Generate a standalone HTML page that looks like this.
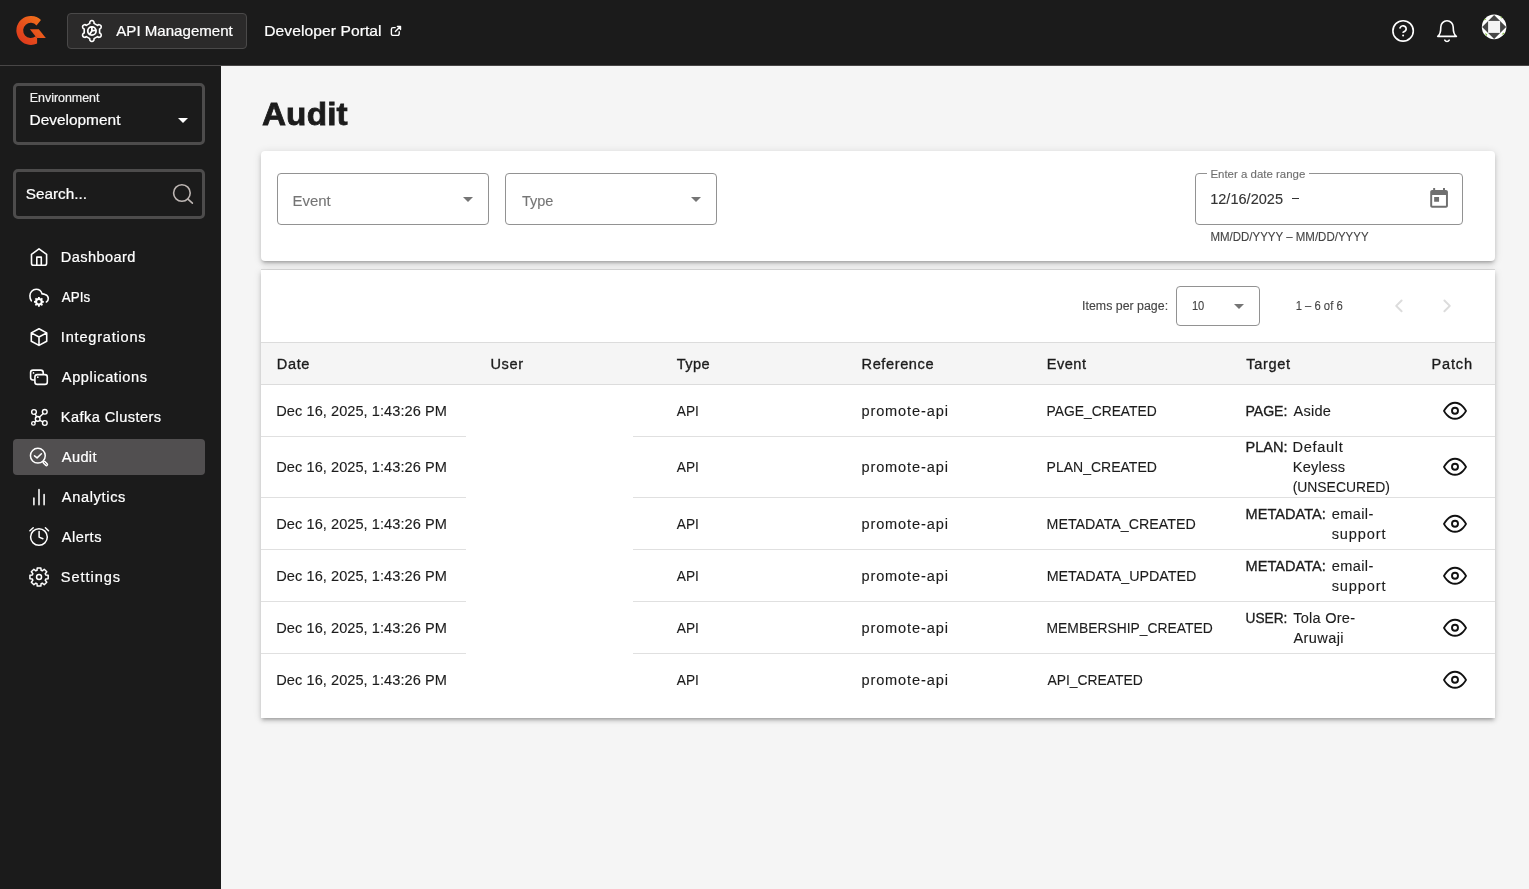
<!DOCTYPE html>
<html lang="en">
<head>
<meta charset="utf-8">
<title>Audit</title>
<style>
*{box-sizing:border-box;margin:0;padding:0}
html,body{width:1529px;height:889px;overflow:hidden;background:#f5f5f5;font-family:"Liberation Sans",sans-serif;color:#1c1c1c}
.a{position:absolute}
.t{position:absolute;white-space:pre;line-height:20px;height:20px;transform-origin:0 50%}
#topbar{position:absolute;left:0;top:0;width:1529px;height:66px;background:#1b1b1b;border-bottom:1px solid #484646}
#sidebar{position:absolute;left:0;top:66px;width:221px;height:823px;background:#1b1b1b}
#main{position:absolute;left:221px;top:67px;width:1308px;height:822px;background:#f5f5f5}
.card{position:absolute;background:#fff;border-radius:4px;box-shadow:0 3px 3px -2px rgba(0,0,0,.2),0 3px 4px 0 rgba(0,0,0,.14),0 1px 8px 0 rgba(0,0,0,.12)}
.tcard{border-radius:0}
.obox{position:absolute;border:1px solid #929292;border-radius:4px;background:#fff}
.dbox{position:absolute;border:3px solid #4d4c4c;border-radius:5px}
.tri{position:absolute;width:0;height:0;border-left:5px solid transparent;border-right:5px solid transparent;border-top:5px solid #757575}
.hl{position:absolute;height:1px;background:#e0e0e0}
svg{position:absolute;overflow:visible}

#texts{position:absolute;left:0;top:0;width:1529px;height:889px;will-change:transform;transform:translateZ(0)}

</style>
</head>
<body>
<div id="topbar"></div>
<div id="sidebar"></div>
<div id="main"></div>
<!-- top bar -->
<div class="a" style="left:67px;top:13px;width:180px;height:36px;border:1px solid #4a4949;border-radius:4px;background:#2b2a2a"></div>
<!-- sidebar -->
<div class="dbox" style="left:13px;top:83px;width:192px;height:62px"></div>
<div class="tri" style="left:178px;top:118px;border-top-color:#fff"></div>
<div class="dbox" style="left:13px;top:169px;width:192px;height:50px"></div>
<div class="a" style="left:13px;top:439px;width:192px;height:36px;border-radius:4px;background:#514f50"></div>
<!-- filter card -->
<div class="card" style="left:261px;top:151px;width:1234px;height:110px"></div>
<div class="obox" style="left:277px;top:173px;width:212px;height:52px"></div>
<div class="tri" style="left:463px;top:197px"></div>
<div class="obox" style="left:505px;top:173px;width:212px;height:52px"></div>
<div class="tri" style="left:691px;top:197px"></div>
<div class="obox" style="left:1195px;top:173px;width:268px;height:52px"></div>
<div class="a" style="left:1207px;top:172px;width:102px;height:4px;background:#fff"></div>
<div class="a" style="left:1292px;top:198px;width:7px;height:1.4px;background:#333"></div>
<!-- table card -->
<div class="card tcard" style="left:261px;top:270px;width:1234px;height:448px"></div>
<div class="a" style="left:261px;top:269px;width:1234px;height:1px;background:rgba(0,0,0,.1)"></div>
<div class="obox" style="left:1176px;top:286px;width:84px;height:40px"></div>
<div class="tri" style="left:1234px;top:304px;border-top-color:#757575"></div>
<div class="a" style="left:261px;top:342px;width:1234px;height:43px;background:#f5f5f5;border-top:1px solid #dcdcdc;border-bottom:1px solid #dcdcdc"></div>
<div class="hl" style="left:261px;top:436px;width:1234px"></div>
<div class="hl" style="left:261px;top:497px;width:1234px"></div>
<div class="hl" style="left:261px;top:549px;width:1234px"></div>
<div class="hl" style="left:261px;top:601px;width:1234px"></div>
<div class="hl" style="left:261px;top:653px;width:1234px"></div>
<!-- redaction block over user column -->
<div class="a" style="left:466px;top:385px;width:167px;height:321px;background:#fff"></div>
<svg width="1529" height="889" viewBox="0 0 1529 889" style="left:0;top:0">
<defs><linearGradient id="lg" x1="45" y1="16" x2="20" y2="45" gradientUnits="userSpaceOnUse"><stop offset="0" stop-color="#f37a1b"/><stop offset="0.55" stop-color="#e8501c"/><stop offset="1" stop-color="#dc361c"/></linearGradient></defs>
<path fill="url(#lg)" d="M40.95 19.95 A14.5 14.5 0 1 0 37.1 43.5 L37.1 38 L35.7 36.2 A7.6 7.6 0 1 1 36.5 25.45 Z"/>
<path fill="url(#lg)" d="M29.9 29.3 L38.8 29.3 L45.8 38 L36.8 38 Z"/>
<path fill="none" stroke="#fff" stroke-width="1.6" stroke-linecap="round" stroke-linejoin="round" d="M89.79 23.36 A2.2 2.2 0 1 1 94.01 23.36 L97.46 25.35 A2.2 2.2 0 1 1 99.58 29.01 L99.58 32.99 A2.2 2.2 0 1 1 97.46 36.65 L94.01 38.64 A2.2 2.2 0 1 1 89.79 38.64 L86.34 36.65 A2.2 2.2 0 1 1 84.22 32.99 L84.22 29.01 A2.2 2.2 0 1 1 86.34 25.35Z"/>
<circle cx="91.9" cy="31" r="4.15" fill="none" stroke="#fff" stroke-width="1.8" stroke-linecap="round" stroke-linejoin="round"/>
<path fill="none" stroke="#fff" stroke-width="1.8" stroke-linecap="round" stroke-linejoin="round" d="M91.9 31 V27 M91.9 31 L95.6 30.1 M91.9 31 L89.6 34.3"/>
<path fill="none" stroke="#fff" stroke-width="1.4" stroke-linecap="round" stroke-linejoin="round" d="M395.2 27.6 H393 a1.6 1.6 0 0 0 -1.6 1.6 V33.8 a1.6 1.6 0 0 0 1.6 1.6 H397.6 a1.6 1.6 0 0 0 1.6 -1.6 V31.8"/>
<path fill="none" stroke="#fff" stroke-width="1.4" stroke-linecap="round" stroke-linejoin="round" d="M395.4 31.6 L400.4 26.6 M397.4 26.5 H400.5 V29.6"/>
<circle cx="1403.1" cy="30.9" r="10.2" fill="none" stroke="#fff" stroke-width="1.6" stroke-linecap="round" stroke-linejoin="round"/>
<path fill="none" stroke="#fff" stroke-width="1.6" stroke-linecap="round" stroke-linejoin="round" d="M1400 27.9 a3.2 3.2 0 0 1 6.2 1.05 c0 2.1 -3.1 3.2 -3.1 3.2"/>
<circle cx="1403.1" cy="35.6" r="1" fill="#fff"/>
<path fill="none" stroke="#fff" stroke-width="1.6" stroke-linecap="round" stroke-linejoin="round" d="M1453.2 27 a6.2 6.2 0 0 0 -12.4 0 c0 7.3 -3.1 9.4 -3.1 9.4 h18.7 s-3.2 -2.1 -3.2 -9.4"/>
<path fill="none" stroke="#fff" stroke-width="1.6" stroke-linecap="round" stroke-linejoin="round" d="M1449.2 40.2 a2.5 2.5 0 0 1 -4.4 0"/>
<clipPath id="av"><circle cx="1494.1" cy="26.9" r="12.3"/></clipPath>
<g clip-path="url(#av)"><rect x="1481" y="14" width="27" height="26" fill="#fff"/><path fill="#464646" d="M1494.1 14.9 L1506.1 26.9 L1494.1 38.9 L1482.1 26.9 Z"/><rect x="1488.1" y="20.9" width="12" height="12" fill="#f4f4f4"/><path fill="#8bc34a" d="M1483.2 20.6 l3.2 -.9 l-2 -1.6z M1499.6 16.2 l2.2 2.6 l.3 -2.2z M1485 33 l1.2 3.2 l1.2 -2z M1501.6 34.8 l3.2 -.8 l-1.6 -1.6z"/></g>
<circle cx="181.9" cy="193" r="8.3" fill="none" stroke="#bdb6b3" stroke-width="1.6" stroke-linecap="round" stroke-linejoin="round"/>
<path fill="none" stroke="#bdb6b3" stroke-width="1.6" stroke-linecap="round" stroke-linejoin="round" d="M187.9 199.1 L192.4 203.2"/>
<path fill="none" stroke="#fff" stroke-width="1.6" stroke-linecap="round" stroke-linejoin="round" d="M31.5 254.3 L39 248.8 L46.6 254.3 V263.2 a2.1 2.1 0 0 1 -2.1 2.1 H33.6 a2.1 2.1 0 0 1 -2.1 -2.1 Z"/>
<path fill="none" stroke="#fff" stroke-width="1.6" stroke-linecap="round" stroke-linejoin="round" d="M36.8 265.2 V257.1 H41.3 V265.2"/>
<path fill="none" stroke="#fff" stroke-width="1.6" stroke-linecap="round" stroke-linejoin="round" d="M31.3 300.8 C30.3 299.5 29.9 297.8 29.9 295.75 C29.9 292.2 32.7 289.3 36.17 289.3 C39 289.3 41.3 291.2 42.13 293.95 C43 293.85 44.1 294.05 45.2 294.55 C47 295.3 48.3 296.7 48.3 298.5 C48.3 300.1 47.6 301.3 46.4 302"/>
<path fill="#fff" fill-rule="evenodd" d="M37.97 298.06 L38.00 296.88 L39.80 296.88 L39.83 298.06 L40.89 298.50 L41.74 297.69 L43.01 298.96 L42.20 299.81 L42.64 300.87 L43.82 300.90 L43.82 302.70 L42.64 302.73 L42.20 303.79 L43.01 304.64 L41.74 305.91 L40.89 305.10 L39.83 305.54 L39.80 306.72 L38.00 306.72 L37.97 305.54 L36.91 305.10 L36.06 305.91 L34.79 304.64 L35.60 303.79 L35.16 302.73 L33.98 302.70 L33.98 300.90 L35.16 300.87 L35.60 299.81 L34.79 298.96 L36.06 297.69 L36.91 298.50Z M40.7 301.8 a1.8 1.8 0 1 0 -3.6 0 a1.8 1.8 0 1 0 3.6 0z"/>
<path fill="none" stroke="#fff" stroke-width="1.6" stroke-linecap="round" stroke-linejoin="round" d="M39 328.7 L46.7 332.9 V341.3 L39 345.4 L31.3 341.3 V332.9 Z M31.3 332.9 L39 337 L46.7 332.9 M39 337 V345.4"/>
<path fill="none" stroke="#fff" stroke-width="1.6" stroke-linecap="round" stroke-linejoin="round" d="M34.2 380 H33 a2.4 2.4 0 0 1 -2.4 -2.4 V372.5 a2.4 2.4 0 0 1 2.4 -2.4 H40.8 a2.4 2.4 0 0 1 2.4 2.4 V374"/>
<rect x="34.9" y="374.6" width="12.4" height="9.8" rx="2.4" fill="none" stroke="#fff" stroke-width="1.6" stroke-linecap="round" stroke-linejoin="round"/>
<circle cx="33.5" cy="372.9" r="0.85" fill="#fff"/><circle cx="37.8" cy="377.2" r="0.85" fill="#fff"/>
<path fill="none" stroke="#fff" stroke-width="1.4" stroke-linecap="round" stroke-linejoin="round" d="M35.2 414 L36.6 416.9 M43.3 413.5 L39.3 417.3 M34.8 422.2 L36 420.7 M39.6 420.3 L43 421.8"/>
<circle cx="34.0" cy="412.0" r="2.3499999999999996" fill="none" stroke="#fff" stroke-width="1.4" stroke-linecap="round" stroke-linejoin="round"/>
<circle cx="44.8" cy="411.8" r="2.3499999999999996" fill="none" stroke="#fff" stroke-width="1.4" stroke-linecap="round" stroke-linejoin="round"/>
<circle cx="37.7" cy="418.9" r="2.3499999999999996" fill="none" stroke="#fff" stroke-width="1.4" stroke-linecap="round" stroke-linejoin="round"/>
<circle cx="33.4" cy="423.4" r="1.75" fill="none" stroke="#fff" stroke-width="1.4" stroke-linecap="round" stroke-linejoin="round"/>
<circle cx="44.8" cy="423.0" r="2.3499999999999996" fill="none" stroke="#fff" stroke-width="1.4" stroke-linecap="round" stroke-linejoin="round"/>
<circle cx="37.85" cy="455.7" r="7.4" fill="none" stroke="#fff" stroke-width="1.5" stroke-linecap="round" stroke-linejoin="round"/>
<path fill="none" stroke="#fff" stroke-width="1.5" stroke-linecap="round" stroke-linejoin="round" d="M34.5 455.8 L37.1 457.9 L41.4 453.8"/>
<path fill="none" stroke="#fff" stroke-width="3.6" stroke-linecap="round" stroke-linejoin="round" d="M44.1 462.3 L46.4 464.5"/><path fill="none" stroke="#514f50" stroke-width="0.9" stroke-linecap="round" stroke-linejoin="round" d="M44.2 462.4 L46.3 464.4"/>
<path fill="none" stroke="#ececec" stroke-width="1.7" stroke-linecap="round" stroke-linejoin="round" d="M33.9 498.2 V504.6 M39 489.7 V504.6 M44.1 494.6 V504.6" stroke-linecap="butt"/>
<circle cx="38.95" cy="537" r="8.35" fill="none" stroke="#fff" stroke-width="1.5" stroke-linecap="round" stroke-linejoin="round"/>
<path fill="none" stroke="#fff" stroke-width="1.5" stroke-linecap="round" stroke-linejoin="round" d="M39.1 531.6 V537.1 L42.9 538.8 M29.9 530.8 L33.2 527.8 M45.4 527.8 L48.5 530.8"/>
<path fill="none" stroke="#fff" stroke-width="1.5" stroke-linecap="round" stroke-linejoin="round" d="M36.99 570.31 L37.24 567.88 L40.86 567.88 L41.11 570.31 L42.33 570.81 L44.22 569.27 L46.78 571.83 L45.24 573.72 L45.74 574.94 L48.17 575.19 L48.17 578.81 L45.74 579.06 L45.24 580.28 L46.78 582.17 L44.22 584.73 L42.33 583.19 L41.11 583.69 L40.86 586.12 L37.24 586.12 L36.99 583.69 L35.77 583.19 L33.88 584.73 L31.32 582.17 L32.86 580.28 L32.36 579.06 L29.93 578.81 L29.93 575.19 L32.36 574.94 L32.86 573.72 L31.32 571.83 L33.88 569.27 L35.77 570.81Z"/>
<circle cx="39.05" cy="577" r="2.5" fill="none" stroke="#fff" stroke-width="1.5" stroke-linecap="round" stroke-linejoin="round"/>
<g transform="translate(1427.25 187.05) scale(0.985)" fill="#6f6f6f"><path d="M19 3h-1V1h-2v2H8V1H6v2H5c-1.11 0-1.99.9-1.99 2L3 19c0 1.1.89 2 2 2h14c1.1 0 2-.9 2-2V5c0-1.1-.9-2-2-2zm0 16H5V8h14v11zM7 10h5v5H7z"/></g>
<path fill="none" stroke="#dcdcdc" stroke-width="2" stroke-linecap="round" stroke-linejoin="round" stroke-linecap="butt" stroke-linejoin="miter" d="M1401.6 300.5 L1396.2 305.9 L1401.6 311.3"/>
<path fill="none" stroke="#dcdcdc" stroke-width="2" stroke-linecap="round" stroke-linejoin="round" stroke-linecap="butt" stroke-linejoin="miter" d="M1444.4 300.5 L1449.8 305.9 L1444.4 311.3"/>
<g transform="translate(1443 398.8)" fill="none" stroke="#111" stroke-width="1.9" stroke-linecap="round" stroke-linejoin="round"><path d="M1 12s4-8 11-8 11 8 11 8-4 8-11 8-11-8-11-8z"/><circle cx="12" cy="12" r="3"/></g>
<g transform="translate(1443 454.8)" fill="none" stroke="#111" stroke-width="1.9" stroke-linecap="round" stroke-linejoin="round"><path d="M1 12s4-8 11-8 11 8 11 8-4 8-11 8-11-8-11-8z"/><circle cx="12" cy="12" r="3"/></g>
<g transform="translate(1443 511.8)" fill="none" stroke="#111" stroke-width="1.9" stroke-linecap="round" stroke-linejoin="round"><path d="M1 12s4-8 11-8 11 8 11 8-4 8-11 8-11-8-11-8z"/><circle cx="12" cy="12" r="3"/></g>
<g transform="translate(1443 563.8)" fill="none" stroke="#111" stroke-width="1.9" stroke-linecap="round" stroke-linejoin="round"><path d="M1 12s4-8 11-8 11 8 11 8-4 8-11 8-11-8-11-8z"/><circle cx="12" cy="12" r="3"/></g>
<g transform="translate(1443 615.8)" fill="none" stroke="#111" stroke-width="1.9" stroke-linecap="round" stroke-linejoin="round"><path d="M1 12s4-8 11-8 11 8 11 8-4 8-11 8-11-8-11-8z"/><circle cx="12" cy="12" r="3"/></g>
<g transform="translate(1443 667.8)" fill="none" stroke="#111" stroke-width="1.9" stroke-linecap="round" stroke-linejoin="round"><path d="M1 12s4-8 11-8 11 8 11 8-4 8-11 8-11-8-11-8z"/><circle cx="12" cy="12" r="3"/></g>
</svg>

<div id="texts">
<span class="t" style="left:116px;top:20.8px;font-size:15px;color:#ffffff;transform:translateX(0.32px) scaleX(1.0047);-webkit-text-stroke:0.22px #ffffff;">API Management</span>
<span class="t" style="left:264px;top:20.8px;font-size:15px;color:#ffffff;letter-spacing:0.079px;transform:translateX(0.16px) scaleX(1.0400);-webkit-text-stroke:0.22px #ffffff;">Developer Portal</span>
<span class="t" style="left:29px;top:88.2px;font-size:12px;color:#f0f0f0;transform:translateX(0.82px) scaleX(1.0329);-webkit-text-stroke:0.22px #f0f0f0;">Environment</span>
<span class="t" style="left:29px;top:109.8px;font-size:15px;color:#ffffff;transform:translateX(0.51px) scaleX(1.0286);-webkit-text-stroke:0.22px #ffffff;">Development</span>
<span class="t" style="left:25px;top:184.0px;font-size:15px;color:#ffffff;transform:translateX(0.72px) scaleX(1.0209);-webkit-text-stroke:0.22px #ffffff;">Search...</span>
<span class="t" style="left:60px;top:247.1px;font-size:14px;color:#ffffff;letter-spacing:0.406px;transform:translateX(0.86px) scaleX(1.0400);-webkit-text-stroke:0.22px #ffffff;">Dashboard</span>
<span class="t" style="left:61px;top:287.1px;font-size:14px;color:#ffffff;transform:translateX(0.81px) scaleX(0.9558);-webkit-text-stroke:0.22px #ffffff;">APIs</span>
<span class="t" style="left:60px;top:327.1px;font-size:14px;color:#ffffff;letter-spacing:0.758px;transform:translateX(0.85px) scaleX(1.0400);-webkit-text-stroke:0.22px #ffffff;">Integrations</span>
<span class="t" style="left:61px;top:367.1px;font-size:14px;color:#ffffff;letter-spacing:0.590px;transform:translateX(0.81px) scaleX(1.0400);-webkit-text-stroke:0.22px #ffffff;">Applications</span>
<span class="t" style="left:60px;top:407.1px;font-size:14px;color:#ffffff;letter-spacing:0.408px;transform:translateX(0.86px) scaleX(1.0400);-webkit-text-stroke:0.22px #ffffff;">Kafka Clusters</span>
<span class="t" style="left:61px;top:447.1px;font-size:14px;color:#ffffff;letter-spacing:0.370px;transform:translateX(0.81px) scaleX(1.0400);-webkit-text-stroke:0.22px #ffffff;">Audit</span>
<span class="t" style="left:61px;top:487.1px;font-size:14px;color:#ffffff;letter-spacing:0.632px;transform:translateX(0.83px) scaleX(1.0400);-webkit-text-stroke:0.22px #ffffff;">Analytics</span>
<span class="t" style="left:61px;top:527.1px;font-size:14px;color:#ffffff;letter-spacing:0.462px;transform:translateX(0.80px) scaleX(1.0400);-webkit-text-stroke:0.22px #ffffff;">Alerts</span>
<span class="t" style="left:60px;top:567.1px;font-size:14px;color:#ffffff;letter-spacing:0.907px;transform:translateX(0.85px) scaleX(1.0400);-webkit-text-stroke:0.22px #ffffff;">Settings</span>
<span class="t" style="left:261px;top:103.9px;font-size:32px;color:#1c1c1c;letter-spacing:0.180px;transform:translateX(0.90px) scaleX(1.0400);font-weight:700;-webkit-text-stroke:0.8px #1c1c1c;">Audit</span>
<span class="t" style="left:292px;top:190.8px;font-size:15px;color:#757575;transform:translateX(0.44px) scaleX(0.9983);-webkit-text-stroke:0.12px #757575;">Event</span>
<span class="t" style="left:521px;top:190.8px;font-size:15px;color:#757575;transform:translateX(0.92px) scaleX(0.9668);-webkit-text-stroke:0.12px #757575;">Type</span>
<span class="t" style="left:1210px;top:164.2px;font-size:11px;color:#6f6f6f;letter-spacing:0.009px;transform:translateX(0.42px) scaleX(1.0400);-webkit-text-stroke:0.12px #6f6f6f;">Enter a date range</span>
<span class="t" style="left:1210px;top:189.1px;font-size:14px;color:#333;transform:translateX(0.15px) scaleX(1.0400);-webkit-text-stroke:0.12px #333;">12/16/2025</span>
<span class="t" style="left:1210px;top:227.2px;font-size:12px;color:#444;transform:translateX(0.42px) scaleX(0.9575);-webkit-text-stroke:0.12px #444;">MM/DD/YYYY – MM/DD/YYYY</span>
<span class="t" style="left:1082px;top:295.8px;font-size:12px;color:#444;transform:translateX(0.09px) scaleX(1.0313);-webkit-text-stroke:0.12px #444;">Items per page:</span>
<span class="t" style="left:1191px;top:295.8px;font-size:12px;color:#444;transform:translateX(0.89px) scaleX(0.9274);-webkit-text-stroke:0.12px #444;">10</span>
<span class="t" style="left:1295px;top:295.8px;font-size:12px;color:#444;transform:translateX(0.66px) scaleX(0.9392);-webkit-text-stroke:0.12px #444;">1 – 6 of 6</span>
<span class="t" style="left:276px;top:354.1px;font-size:14px;color:#1c1c1c;letter-spacing:0.570px;transform:translateX(0.83px) scaleX(1.0400);-webkit-text-stroke:0.32px #1c1c1c;">Date</span>
<span class="t" style="left:490px;top:354.1px;font-size:14px;color:#1c1c1c;letter-spacing:0.624px;transform:translateX(0.39px) scaleX(1.0400);-webkit-text-stroke:0.32px #1c1c1c;">User</span>
<span class="t" style="left:676px;top:354.1px;font-size:14px;color:#1c1c1c;letter-spacing:0.369px;transform:translateX(0.78px) scaleX(1.0400);-webkit-text-stroke:0.32px #1c1c1c;">Type</span>
<span class="t" style="left:861px;top:354.1px;font-size:14px;color:#1c1c1c;letter-spacing:0.574px;transform:translateX(0.55px) scaleX(1.0400);-webkit-text-stroke:0.32px #1c1c1c;">Reference</span>
<span class="t" style="left:1046px;top:354.1px;font-size:14px;color:#1c1c1c;letter-spacing:0.497px;transform:translateX(0.72px) scaleX(1.0400);-webkit-text-stroke:0.32px #1c1c1c;">Event</span>
<span class="t" style="left:1246px;top:354.1px;font-size:14px;color:#1c1c1c;letter-spacing:0.661px;transform:translateX(0.17px) scaleX(1.0400);-webkit-text-stroke:0.32px #1c1c1c;">Target</span>
<span class="t" style="left:1431px;top:354.1px;font-size:14px;color:#1c1c1c;letter-spacing:0.808px;transform:translateX(0.39px) scaleX(1.0400);-webkit-text-stroke:0.32px #1c1c1c;">Patch</span>
<span class="t" style="left:276px;top:401.1px;font-size:14px;color:#1c1c1c;letter-spacing:0.057px;transform:translateX(0.30px) scaleX(1.0400);-webkit-text-stroke:0.12px #1c1c1c;">Dec 16, 2025, 1:43:26 PM</span>
<span class="t" style="left:676px;top:401.1px;font-size:14px;color:#1c1c1c;transform:translateX(0.79px) scaleX(0.9771);-webkit-text-stroke:0.12px #1c1c1c;">API</span>
<span class="t" style="left:861px;top:401.1px;font-size:14px;color:#1c1c1c;letter-spacing:0.844px;transform:translateX(0.43px) scaleX(1.0400);-webkit-text-stroke:0.12px #1c1c1c;">promote-api</span>
<span class="t" style="left:1046px;top:401.1px;font-size:14px;color:#1c1c1c;transform:translateX(0.54px) scaleX(0.9882);-webkit-text-stroke:0.12px #1c1c1c;">PAGE_CREATED</span>
<span class="t" style="left:276px;top:457.1px;font-size:14px;color:#1c1c1c;letter-spacing:0.057px;transform:translateX(0.30px) scaleX(1.0400);-webkit-text-stroke:0.12px #1c1c1c;">Dec 16, 2025, 1:43:26 PM</span>
<span class="t" style="left:676px;top:457.1px;font-size:14px;color:#1c1c1c;transform:translateX(0.79px) scaleX(0.9771);-webkit-text-stroke:0.12px #1c1c1c;">API</span>
<span class="t" style="left:861px;top:457.1px;font-size:14px;color:#1c1c1c;letter-spacing:0.844px;transform:translateX(0.43px) scaleX(1.0400);-webkit-text-stroke:0.12px #1c1c1c;">promote-api</span>
<span class="t" style="left:1046px;top:457.1px;font-size:14px;color:#1c1c1c;transform:translateX(0.54px) scaleX(1.0008);-webkit-text-stroke:0.12px #1c1c1c;">PLAN_CREATED</span>
<span class="t" style="left:276px;top:514.1px;font-size:14px;color:#1c1c1c;letter-spacing:0.057px;transform:translateX(0.30px) scaleX(1.0400);-webkit-text-stroke:0.12px #1c1c1c;">Dec 16, 2025, 1:43:26 PM</span>
<span class="t" style="left:676px;top:514.1px;font-size:14px;color:#1c1c1c;transform:translateX(0.79px) scaleX(0.9771);-webkit-text-stroke:0.12px #1c1c1c;">API</span>
<span class="t" style="left:861px;top:514.1px;font-size:14px;color:#1c1c1c;letter-spacing:0.844px;transform:translateX(0.43px) scaleX(1.0400);-webkit-text-stroke:0.12px #1c1c1c;">promote-api</span>
<span class="t" style="left:1046px;top:514.1px;font-size:14px;color:#1c1c1c;transform:translateX(0.54px) scaleX(1.0166);-webkit-text-stroke:0.12px #1c1c1c;">METADATA_CREATED</span>
<span class="t" style="left:276px;top:566.1px;font-size:14px;color:#1c1c1c;letter-spacing:0.057px;transform:translateX(0.30px) scaleX(1.0400);-webkit-text-stroke:0.12px #1c1c1c;">Dec 16, 2025, 1:43:26 PM</span>
<span class="t" style="left:676px;top:566.1px;font-size:14px;color:#1c1c1c;transform:translateX(0.79px) scaleX(0.9771);-webkit-text-stroke:0.12px #1c1c1c;">API</span>
<span class="t" style="left:861px;top:566.1px;font-size:14px;color:#1c1c1c;letter-spacing:0.844px;transform:translateX(0.43px) scaleX(1.0400);-webkit-text-stroke:0.12px #1c1c1c;">promote-api</span>
<span class="t" style="left:1046px;top:566.1px;font-size:14px;color:#1c1c1c;transform:translateX(0.64px) scaleX(1.0205);-webkit-text-stroke:0.12px #1c1c1c;">METADATA_UPDATED</span>
<span class="t" style="left:276px;top:618.1px;font-size:14px;color:#1c1c1c;letter-spacing:0.057px;transform:translateX(0.30px) scaleX(1.0400);-webkit-text-stroke:0.12px #1c1c1c;">Dec 16, 2025, 1:43:26 PM</span>
<span class="t" style="left:676px;top:618.1px;font-size:14px;color:#1c1c1c;transform:translateX(0.79px) scaleX(0.9771);-webkit-text-stroke:0.12px #1c1c1c;">API</span>
<span class="t" style="left:861px;top:618.1px;font-size:14px;color:#1c1c1c;letter-spacing:0.844px;transform:translateX(0.43px) scaleX(1.0400);-webkit-text-stroke:0.12px #1c1c1c;">promote-api</span>
<span class="t" style="left:1046px;top:618.1px;font-size:14px;color:#1c1c1c;transform:translateX(0.54px) scaleX(0.9906);-webkit-text-stroke:0.12px #1c1c1c;">MEMBERSHIP_CREATED</span>
<span class="t" style="left:276px;top:670.1px;font-size:14px;color:#1c1c1c;letter-spacing:0.057px;transform:translateX(0.30px) scaleX(1.0400);-webkit-text-stroke:0.12px #1c1c1c;">Dec 16, 2025, 1:43:26 PM</span>
<span class="t" style="left:676px;top:670.1px;font-size:14px;color:#1c1c1c;transform:translateX(0.79px) scaleX(0.9771);-webkit-text-stroke:0.12px #1c1c1c;">API</span>
<span class="t" style="left:861px;top:670.1px;font-size:14px;color:#1c1c1c;letter-spacing:0.844px;transform:translateX(0.43px) scaleX(1.0400);-webkit-text-stroke:0.12px #1c1c1c;">promote-api</span>
<span class="t" style="left:1047px;top:670.1px;font-size:14px;color:#1c1c1c;transform:translateX(0.41px) scaleX(0.9922);-webkit-text-stroke:0.12px #1c1c1c;">API_CREATED</span>
<span class="t" style="left:1245px;top:401.1px;font-size:14px;color:#1c1c1c;transform:translateX(0.38px) scaleX(1.0076);-webkit-text-stroke:0.32px #1c1c1c;">PAGE:</span>
<span class="t" style="left:1293px;top:401.1px;font-size:14px;color:#1c1c1c;letter-spacing:0.212px;transform:translateX(0.61px) scaleX(1.0400);-webkit-text-stroke:0.12px #1c1c1c;">Aside</span>
<span class="t" style="left:1245px;top:437.1px;font-size:14px;color:#1c1c1c;transform:translateX(0.42px) scaleX(1.0396);-webkit-text-stroke:0.32px #1c1c1c;">PLAN:</span>
<span class="t" style="left:1292px;top:437.1px;font-size:14px;color:#1c1c1c;letter-spacing:0.679px;transform:translateX(0.44px) scaleX(1.0400);-webkit-text-stroke:0.12px #1c1c1c;">Default</span>
<span class="t" style="left:1292px;top:457.1px;font-size:14px;color:#1c1c1c;letter-spacing:0.205px;transform:translateX(0.72px) scaleX(1.0400);-webkit-text-stroke:0.12px #1c1c1c;">Keyless</span>
<span class="t" style="left:1292px;top:477.1px;font-size:14px;color:#1c1c1c;transform:translateX(0.64px) scaleX(0.9928);-webkit-text-stroke:0.12px #1c1c1c;">(UNSECURED)</span>
<span class="t" style="left:1245px;top:504.1px;font-size:14px;color:#1c1c1c;letter-spacing:0.021px;transform:translateX(0.54px) scaleX(1.0400);-webkit-text-stroke:0.32px #1c1c1c;">METADATA:</span>
<span class="t" style="left:1331px;top:504.1px;font-size:14px;color:#1c1c1c;letter-spacing:0.396px;transform:translateX(0.64px) scaleX(1.0400);-webkit-text-stroke:0.12px #1c1c1c;">email-</span>
<span class="t" style="left:1331px;top:524.1px;font-size:14px;color:#1c1c1c;letter-spacing:0.874px;transform:translateX(0.63px) scaleX(1.0400);-webkit-text-stroke:0.12px #1c1c1c;">support</span>
<span class="t" style="left:1245px;top:556.1px;font-size:14px;color:#1c1c1c;letter-spacing:0.021px;transform:translateX(0.54px) scaleX(1.0400);-webkit-text-stroke:0.32px #1c1c1c;">METADATA:</span>
<span class="t" style="left:1331px;top:556.1px;font-size:14px;color:#1c1c1c;letter-spacing:0.396px;transform:translateX(0.64px) scaleX(1.0400);-webkit-text-stroke:0.12px #1c1c1c;">email-</span>
<span class="t" style="left:1331px;top:576.1px;font-size:14px;color:#1c1c1c;letter-spacing:0.874px;transform:translateX(0.63px) scaleX(1.0400);-webkit-text-stroke:0.12px #1c1c1c;">support</span>
<span class="t" style="left:1245px;top:608.1px;font-size:14px;color:#1c1c1c;transform:translateX(0.52px) scaleX(0.9786);-webkit-text-stroke:0.32px #1c1c1c;">USER:</span>
<span class="t" style="left:1293px;top:608.1px;font-size:14px;color:#1c1c1c;letter-spacing:0.239px;transform:translateX(0.20px) scaleX(1.0400);-webkit-text-stroke:0.12px #1c1c1c;">Tola Ore-</span>
<span class="t" style="left:1293px;top:628.1px;font-size:14px;color:#1c1c1c;letter-spacing:0.384px;transform:translateX(0.41px) scaleX(1.0400);-webkit-text-stroke:0.12px #1c1c1c;">Aruwaji</span>
</div>
</body>
</html>
